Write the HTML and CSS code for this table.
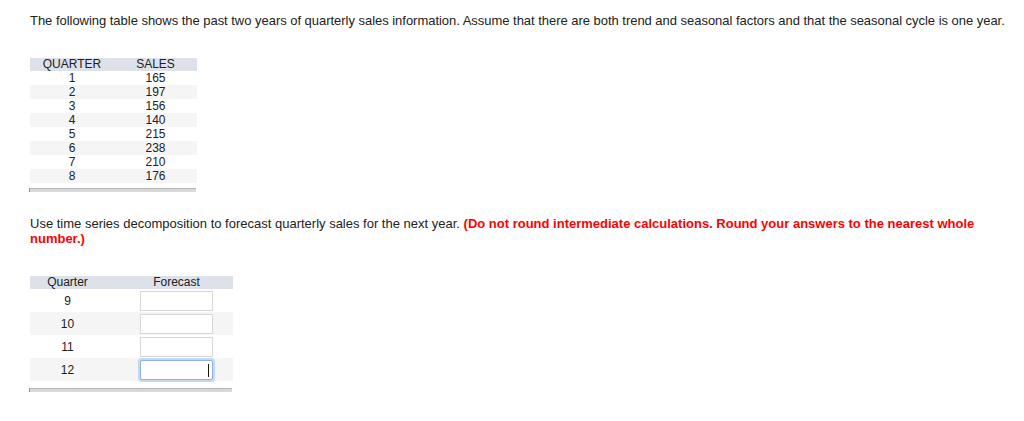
FILE: index.html
```html
<!DOCTYPE html>
<html>
<head>
<meta charset="utf-8">
<link rel="stylesheet" href="styles.css">
</head>
<body>
<div class="page">
  <p class="intro">The following table shows the past two years of quarterly sales information. Assume that there are both trend and seasonal factors and that the seasonal cycle is one year.</p>

  <table class="data">
    <thead>
      <tr><th class="c1">QUARTER</th><th class="c2">SALES</th></tr>
    </thead>
    <tbody>
      <tr><td>1</td><td>165</td></tr>
      <tr><td>2</td><td>197</td></tr>
      <tr><td>3</td><td>156</td></tr>
      <tr><td>4</td><td>140</td></tr>
      <tr><td>5</td><td>215</td></tr>
      <tr><td>6</td><td>238</td></tr>
      <tr><td>7</td><td>210</td></tr>
      <tr><td>8</td><td>176</td></tr>
    </tbody>
  </table>
  <div class="bar bar1"></div>

  <p class="question">Use time series decomposition to forecast quarterly sales for the next year. <strong class="warn">(Do not round intermediate calculations. Round your answers to the nearest whole number.)</strong></p>

  <table class="answer">
    <thead>
      <tr><th class="a1">Quarter</th><th class="a2">Forecast</th></tr>
    </thead>
    <tbody>
      <tr><td class="a1">9</td><td class="a2"><input class="box" type="text"></td></tr>
      <tr><td class="a1">10</td><td class="a2"><input class="box" type="text"></td></tr>
      <tr><td class="a1">11</td><td class="a2"><input class="box" type="text"></td></tr>
      <tr><td class="a1">12</td><td class="a2"><span class="focus-wrap"><input class="box focused" type="text"><span class="caret"></span></span></td></tr>
    </tbody>
  </table>
  <div class="bar bar2"></div>
</div>
</body>
</html>
```

FILE: styles.css
```css
html, body {
  margin: 0;
  padding: 0;
  background: #ffffff;
}

.page {
  padding: 13px 0 0 30px;
  font-family: "Liberation Sans", Arial, Helvetica, sans-serif;
  color: #222222;
}

.intro {
  margin: 0;
  font-size: 13px;
  line-height: 15px;
  letter-spacing: -0.03px;
}

.data {
  margin-top: 30px;
  border-collapse: collapse;
  font-size: 12px;
}

.data th {
  background: #dde1ea;
  font-weight: normal;
  height: 13px;
  line-height: 13px;
  padding: 0;
  text-align: center;
}

.data .c1 { width: 84px; }
.data .c2 { width: 83px; }

.data td {
  height: 14px;
  line-height: 14px;
  padding: 0;
  text-align: center;
}

.data tbody tr:nth-child(even) td,
.answer tbody tr:nth-child(even) td {
  background: #f5f5f5;
}

.bar {
  height: 3px;
  background: #d9d9d9;
  border-top: 1px solid #b4b4b4;
  border-left: 1px solid #8f8f8f;
  box-sizing: content-box;
}

.bar1 {
  width: 166px;
  margin-top: 5px;
  margin-left: -1px;
}

.question {
  margin: 24px 0 0 0;
  font-size: 13px;
  line-height: 15px;
  width: 960px;
}

.warn {
  color: #ff0000;
  font-weight: bold;
}

.answer {
  margin-top: 30px;
  border-collapse: collapse;
  font-size: 12px;
}

.answer th {
  background: #dde1ea;
  font-weight: normal;
  height: 13px;
  line-height: 13px;
  padding: 0;
  text-align: center;
}

.answer td {
  height: 23px;
  padding: 0;
  vertical-align: middle;
}

.answer .a1 { width: 75px; padding: 0; text-align: center; }
.answer .a2 { width: 113px; padding: 0 0 0 15px; text-align: center; }

.box {
  display: block;
  box-sizing: border-box;
  width: 73px;
  height: 20px;
  margin: 0 auto;
  border: 1px solid #d6d6d6;
  background: #ffffff;
  padding: 0;
  outline: none;
}

.focus-wrap {
  position: relative;
  display: block;
  width: 73px;
  margin: 0 auto;
}

.focused {
  border: 1px solid #8fb2e6;
  box-shadow: 0 0 0 2px #c4d8f6;
  border-radius: 2px;
}

.caret {
  position: absolute;
  right: 4px;
  top: 4px;
  width: 1px;
  height: 13px;
  background: #111111;
}

.bar2 {
  width: 202px;
  margin-top: 7px;
  margin-left: -1px;
}
```
